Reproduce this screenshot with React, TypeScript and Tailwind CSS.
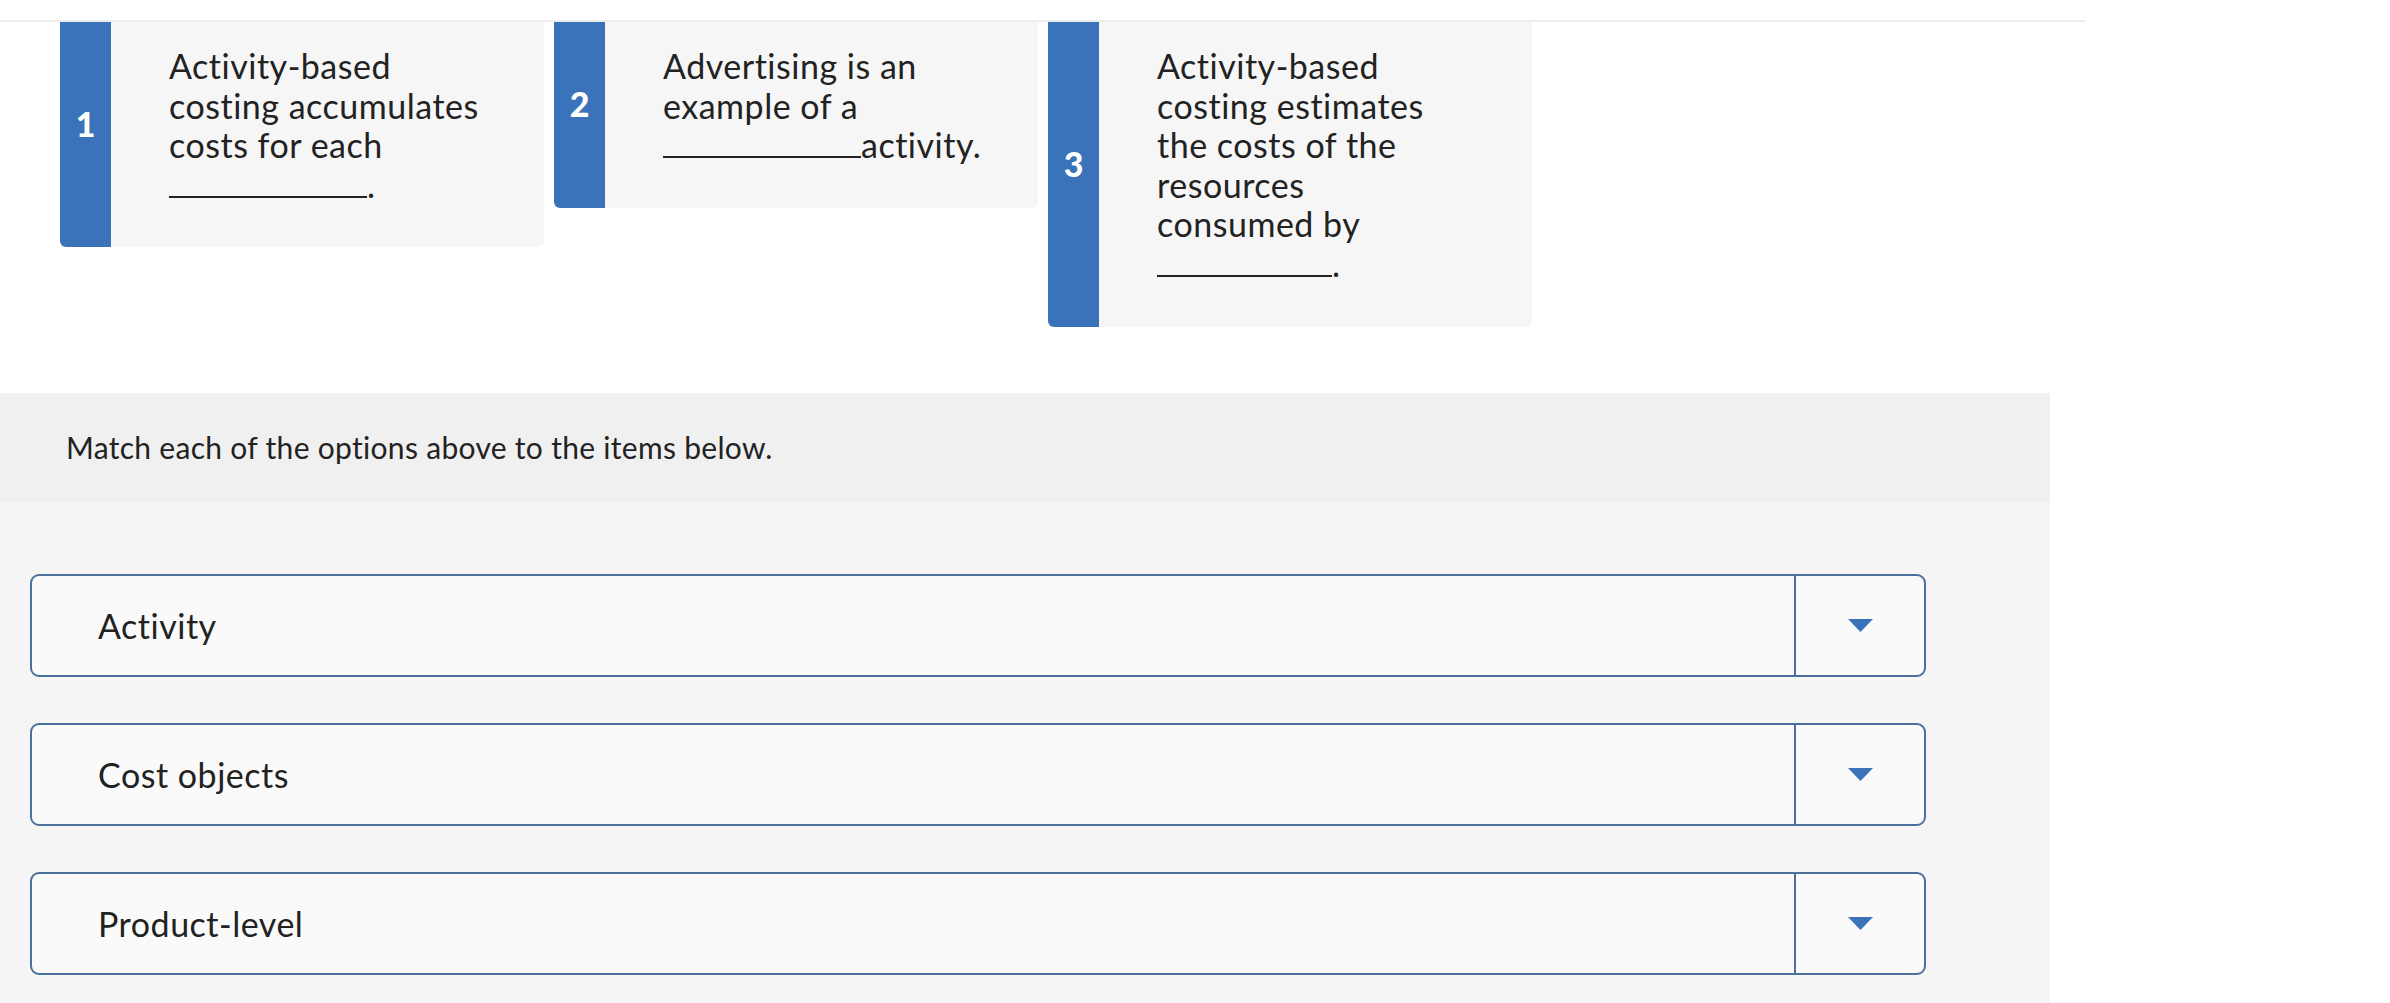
import * as React from 'react';

type Line = { text?: string; blank?: number; after?: string };

interface PromptCard {
    num: number;
    lines: Line[];
}

const CARDS: PromptCard[] = [
    {
        num: 1,
        lines: [
            { text: 'Activity-based' },
            { text: 'costing accumulates' },
            { text: 'costs for each' },
            { blank: 198, after: '.' },
        ],
    },
    {
        num: 2,
        lines: [
            { text: 'Advertising is an' },
            { text: 'example of a' },
            { blank: 198, after: 'activity.' },
        ],
    },
    {
        num: 3,
        lines: [
            { text: 'Activity-based' },
            { text: 'costing estimates' },
            { text: 'the costs of the' },
            { text: 'resources' },
            { text: 'consumed by' },
            { blank: 175, after: '.' },
        ],
    },
];

const ITEMS = ['Activity', 'Cost objects', 'Product-level'];

function Card({ card }: { card: PromptCard }) {
    return (
        <div className="flex w-[484px] shrink-0 rounded-b-[6px] overflow-hidden bg-[#f6f6f6]">
            <div className="w-[51px] shrink-0 bg-[#3a73b9] flex items-center justify-center text-white font-black text-[34px]">
                {card.num}
            </div>
            <div className="pl-[58px] pt-[46px] pb-[43px] text-[34px] tracking-[0.015em] leading-[39.6px] text-[#222]">
                {card.lines.map((line, i) => (
                    <div key={i} className="whitespace-nowrap">
                        {line.text}
                        {line.blank && (
                            <>
                                <span
                                    className="inline-block h-[2px] bg-[#222] align-baseline"
                                    style={{ width: line.blank }}
                                />
                                {line.after}
                            </>
                        )}
                    </div>
                ))}
            </div>
        </div>
    );
}

function Dropdown({ label }: { label: string }) {
    return (
        <div className="flex w-[1896px] h-[103px] border-2 border-[#4a709b] rounded-[9px] bg-[#fafafa]">
            <div className="flex-1 flex items-center pl-[66px] text-[34px] tracking-[0.015em] text-[#222]">{label}</div>
            <div className="w-[130px] border-l-2 border-[#4a709b] flex items-center justify-center">
                <svg width="25" height="13" viewBox="0 0 25 13">
                    <path d="M0 0 L25 0 L12.5 13 Z" fill="#3a73b9" />
                </svg>
            </div>
        </div>
    );
}

export default function App() {
    return (
        <div
            className="relative flex flex-col w-full h-[1003px] bg-white overflow-hidden"
            style={{ fontFamily: 'Lato, "Open Sans", sans-serif' }}
        >
            <div className="absolute top-0 left-0 z-10 w-[2085px] h-[22px] bg-white border-b-2 border-[#ededed]" />

            <div className="flex items-start gap-[10px] pl-[60px]">
                {CARDS.map(card => (
                    <Card key={card.num} card={card} />
                ))}
            </div>

            <div className="mt-[66px] w-[2050px] h-[109px] bg-[#f0f0f0] flex items-center pl-[66px] text-[30px] tracking-[0.01em] text-[#222]">
                Match each of the options above to the items below.
            </div>

            <div className="flex-1 w-[2050px] bg-[#f5f5f5] pt-[72px] pl-[30px] flex flex-col gap-[46px]">
                {ITEMS.map(item => (
                    <Dropdown key={item} label={item} />
                ))}
            </div>
        </div>
    );
}
